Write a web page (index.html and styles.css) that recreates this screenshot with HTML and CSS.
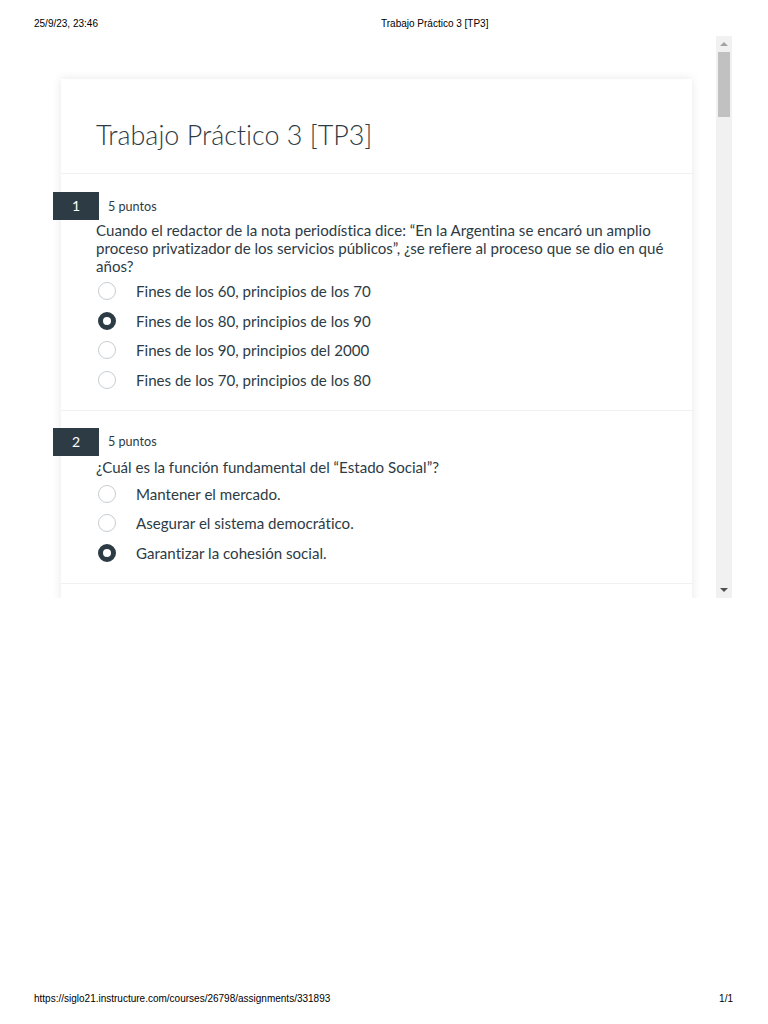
FILE: index.html
```html
<!DOCTYPE html>
<html lang="es">

<head>
    <meta charset="UTF-8">
    <meta name="viewport" content="width=device-width, initial-scale=1.0">
    <title>Trabajo Práctico 3 [TP3]</title>
    <link rel="stylesheet" href="styles.css">
</head>

<body>
    <div class="print-head">
        <span>25/9/23, 23:46</span>
        <span>Trabajo Práctico 3 [TP3]</span>
    </div>

    <div class="screen">
        <div class="viewport">
            <div class="quiz-card">
                <div class="quiz-header">
                    <h1>Trabajo Práctico 3 [TP3]</h1>
                </div>

                <div class="question">
                    <div class="question-top">
                        <div class="question-num">1</div>
                        <div class="points">5 puntos</div>
                    </div>
                    <div class="question-text">Cuando el redactor de la nota periodística dice: “En la Argentina se encaró un amplio proceso privatizador de los servicios públicos”, ¿se refiere al proceso que se dio en qué años?</div>
                    <div class="answer"><span class="radio"></span>Fines de los 60, principios de los 70</div>
                    <div class="answer"><span class="radio checked"></span>Fines de los 80, principios de los 90</div>
                    <div class="answer"><span class="radio"></span>Fines de los 90, principios del 2000</div>
                    <div class="answer"><span class="radio"></span>Fines de los 70, principios de los 80</div>
                </div>

                <div class="question q2">
                    <div class="question-top">
                        <div class="question-num">2</div>
                        <div class="points">5 puntos</div>
                    </div>
                    <div class="question-text">¿Cuál es la función fundamental del “Estado Social”?</div>
                    <div class="answer"><span class="radio"></span>Mantener el mercado.</div>
                    <div class="answer"><span class="radio"></span>Asegurar el sistema democrático.</div>
                    <div class="answer"><span class="radio checked"></span>Garantizar la cohesión social.</div>
                </div>

                <div class="question"></div>
            </div>
        </div>
        <div class="scrollbar">
            <div class="arrow up"></div>
            <div class="thumb"></div>
            <div class="arrow down"></div>
        </div>
    </div>

    <div class="print-foot">
        <span>https://siglo21.instructure.com/courses/26798/assignments/331893</span>
        <span>1/1</span>
    </div>
</body>

</html>
```

FILE: styles.css
```css
body {
    margin: 0;
    width: 768px;
    height: 1024px;
    font-family: 'Liberation Sans', Arial, sans-serif;
    background: #fff;
    color: #000;
    display: flex;
    flex-direction: column;
    overflow: hidden;
}

.print-head {
    display: grid;
    grid-template-columns: 347px auto;
    padding: 18px 0 0 34px;
    height: 18px;
    font-size: 10px;
    line-height: 12px;
}

.screen {
    display: flex;
    margin-left: 34px;
    width: 698px;
    height: 562px;
}

.viewport {
    flex: 1;
    overflow: hidden;
    padding: 43px 0 0 27px;
}

.quiz-card {
    width: 631px;
    background: #fff;
    box-shadow: 0 0 9px rgba(0, 0, 0, 0.1);
    font-family: 'Lato', 'Noto Sans', sans-serif;
    font-variant-ligatures: none;
    color: #2d3b45;
}

.quiz-header {
    padding: 39px 35px 21px;
    border-bottom: 1px solid #eef0f1;
}

.quiz-header h1 {
    margin: 0;
    font-size: 26.9px;
    font-weight: 300;
    line-height: 34px;
}

.question {
    padding: 18px 20px 15px 35px;
    border-bottom: 1px solid #eef0f1;
}

.question.q2 {
    padding-top: 17px;
}

.question-top {
    display: flex;
    align-items: center;
    margin-left: -43px;
}

.question-num {
    width: 46px;
    height: 28px;
    background: #2d3b45;
    color: #fff;
    font-size: 14px;
    line-height: 28px;
    text-align: center;
}

.points {
    margin-left: 9px;
    font-size: 12.6px;
}

.question-text {
    font-size: 15.1px;
    line-height: 18px;
    margin: 1px 0;
}

.q2 .question-text {
    margin: 2px 0 3px;
}

.answer {
    display: flex;
    align-items: center;
    height: 29.7px;
    font-size: 15.1px;
}

.radio {
    flex: none;
    box-sizing: border-box;
    width: 18px;
    height: 18px;
    border: 1px solid #c7cdd1;
    border-radius: 50%;
    margin: 0 20px 0 2px;
    background: #fff;
}

.radio.checked {
    border: 5px solid #2d3b45;
}

.scrollbar {
    width: 16px;
    margin-left: 8px;
    background: #f1f1f1;
    display: flex;
    flex-direction: column;
    align-items: center;
}

.thumb {
    width: 12px;
    height: 65px;
    background: #c1c1c1;
}

.arrow {
    width: 0;
    height: 0;
    border-left: 4px solid transparent;
    border-right: 4px solid transparent;
    margin: 6px 0;
}

.arrow.up {
    border-bottom: 4px solid #a3a3a3;
}

.arrow.down {
    margin-top: auto;
    border-top: 4px solid #505050;
}

.print-foot {
    display: flex;
    justify-content: space-between;
    margin-top: auto;
    padding: 0 35px 19px 34px;
    font-size: 10px;
    line-height: 12px;
}
```
